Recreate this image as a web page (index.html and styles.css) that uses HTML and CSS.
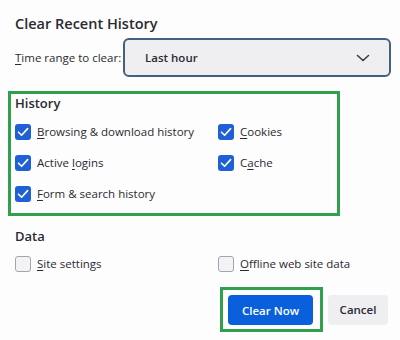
FILE: index.html
```html
<!DOCTYPE html>
<html lang="en">
<head>
    <meta charset="UTF-8">
    <meta name="viewport" content="width=device-width, initial-scale=1.0">
    <title>Clear Recent History</title>
    <link rel="stylesheet" href="styles.css">
</head>
<body>

    <div class="dialog">
        <h1 class="title">Clear Recent History</h1>

        <div class="range">
            <span class="range-label"><u>T</u>ime range to clear:</span>
            <div class="select">
                <span>Last hour</span>
                <svg class="chevron" width="14" height="8" viewBox="0 0 14 8">
                    <path d="M1.5 1.5 L7 6.5 L12.5 1.5" fill="none" stroke="#3b3b42" stroke-width="1.6" stroke-linecap="round" stroke-linejoin="round"/>
                </svg>
            </div>
        </div>

        <div class="group history">
            <h3>History</h3>
            <div class="options">
                <label class="option"><span class="box checked"></span><span><u>B</u>rowsing &amp; download history</span></label>
                <label class="option"><span class="box checked"></span><span><u>C</u>ookies</span></label>
                <label class="option"><span class="box checked"></span><span>Active <u>l</u>ogins</span></label>
                <label class="option"><span class="box checked"></span><span>C<u>a</u>che</span></label>
                <label class="option"><span class="box checked"></span><span><u>F</u>orm &amp; search history</span></label>
            </div>
        </div>

        <div class="group data">
            <h3>Data</h3>
            <div class="options">
                <label class="option"><span class="box"></span><span><u>S</u>ite settings</span></label>
                <label class="option"><span class="box"></span><span><u>O</u>ffline web site data</span></label>
            </div>
        </div>

        <div class="actions">
            <div class="highlight">
                <button class="primary">Clear Now</button>
            </div>
            <button class="secondary">Cancel</button>
        </div>
    </div>

</body>
</html>
```

FILE: styles.css
```css
body {
    margin: 0;
    font-family: "Open Sans", "Noto Sans", sans-serif;
    font-size: 11.5px;
    color: #2b2a33;
    background: #fdfdfd;
}
u {
    text-decoration-thickness: 1px;
    text-underline-offset: 2px;
}
.dialog {
    padding-top: 14px;
}
.title {
    margin: 0 15px;
    font-size: 14.5px;
    line-height: 20px;
    font-weight: 600;
}
.range {
    display: flex;
    align-items: center;
    margin: 4px 9px 0 15px;
    height: 39px;
}
.range-label {
    width: 108px;
    white-space: nowrap;
}
.select {
    flex: 1;
    height: 100%;
    box-sizing: border-box;
    display: flex;
    align-items: center;
    justify-content: space-between;
    padding: 0 19px 0 20px;
    background: #efeff2;
    border: 2px solid #43607e;
    border-radius: 6px;
    font-weight: 600;
}
.group h3 {
    margin: 0;
    font-size: 13px;
    line-height: 18px;
    font-weight: 600;
}
.history {
    margin: 14px 0 0 8px;
    width: 332px;
    height: 125px;
    box-sizing: border-box;
    border: 3px solid #2fa04d;
    padding: 0 4px;
}
.history .options {
    margin-top: 4px;
}
.data {
    margin: 11px 0 0 15px;
}
.data .options {
    margin-top: 3px;
}
.options {
    display: grid;
    grid-template-columns: 203px 1fr;
    grid-auto-rows: 31px;
}
.option {
    display: flex;
    align-items: center;
    gap: 6px;
    white-space: nowrap;
}
.box {
    width: 16px;
    height: 16px;
    box-sizing: border-box;
    border-radius: 3px;
    border: 1px solid #a4a4ad;
    background: #f3f3f5;
}
.box.checked {
    border: none;
    background: #1f60d6 url("data:image/svg+xml,%3Csvg xmlns='http://www.w3.org/2000/svg' width='16' height='16'%3E%3Cpath d='M3.5 8.2 L6.6 11.3 L12.6 4.6' fill='none' stroke='white' stroke-width='1.6' stroke-linecap='round' stroke-linejoin='round'/%3E%3C/svg%3E") no-repeat center;
}
.actions {
    display: flex;
    justify-content: flex-end;
    align-items: center;
    gap: 5px;
    margin: 8px 12px 0 0;
}
.highlight {
    border: 3px solid #2fa04d;
    padding: 5px 7px 4px 5px;
}
button {
    height: 30px;
    border: none;
    border-radius: 4px;
    font-family: inherit;
    font-size: 11.5px;
    font-weight: 600;
    cursor: pointer;
}
.primary {
    width: 85px;
    background: #0a5fdc;
    color: #fff;
}
.secondary {
    width: 60px;
    background: #efeff2;
    color: #2b2a33;
}
```
